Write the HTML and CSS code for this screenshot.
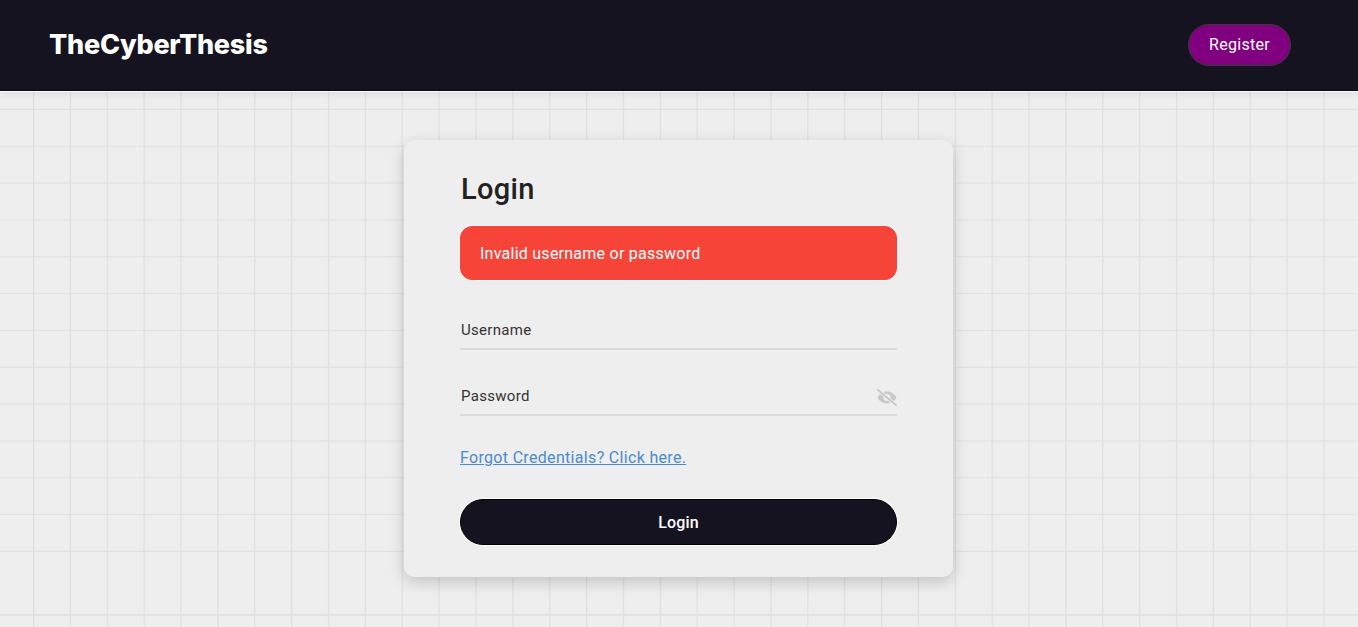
FILE: index.html
```html
<!DOCTYPE html>
<html lang="en">
<head>
<meta charset="utf-8">
<title>TheCyberThesis - Login</title>
<link rel="stylesheet" href="styles.css">
</head>
<body>
<header class="topbar">
  <a class="logo" href="#">TheCyberThesis</a>
  <a class="register" href="#">Register</a>
</header>
<main class="page">
  <form class="card">
    <h1 class="title">Login</h1>
    <div class="alert">Invalid username or password</div>
    <div class="field field-first"><span class="field-label">Username</span></div>
    <div class="field">
      <span class="field-label">Password</span>
      <svg class="eye" viewBox="0 0 20 17" width="20" height="17" aria-hidden="true">
        <path fill="#c9c9c9" fill-rule="evenodd" d="M10 2.500C5.800 2.500 2.200 5 .5 8.500 2.200 12 5.800 14.500 10 14.500s7.800-2.500 9.500-6C17.800 5 14.200 2.500 10 2.500zM10 5a3.500 3.500 0 1 1 0 7 3.500 3.500 0 0 1 0-7z"/>
        <path stroke="#eee" stroke-width="3.600" fill="none" d="M1 0.800l18 15.400"/>
        <path stroke="#c9c9c9" stroke-width="1.900" fill="none" stroke-linecap="round" d="M1 1l18 15"/>
      </svg>
    </div>
    <a class="forgot" href="#">Forgot Credentials? Click here.</a>
    <button class="submit" type="button">Login</button>
  </form>
</main>
</body>
</html>
```
FILE: styles.css
```css
* { box-sizing: border-box; }
html, body { height: 100%; }
body {
  margin: 0;
  overflow: hidden;
  font-family: Roboto, "Liberation Sans", sans-serif;
  color: #222;
  background-color: #eee;
  background-image:
    repeating-linear-gradient(to right, transparent 0 32.4px, #dfdfdf 33.500px, transparent 34.800px, transparent 36.870px),
    repeating-linear-gradient(to bottom, transparent 0 34.600px, #e0e0e0 35.840px, transparent 36.830px),
    linear-gradient(#e3e3e3, #e3e3e3);
  background-size: 100% 100%, 100% 570px, 100% 2px;
  background-position: 0 0, 0 0, 0 614px;
  background-repeat: no-repeat;
}
.topbar {
  height: 91px;
  display: flex;
  align-items: center;
  justify-content: space-between;
  padding: 0 67px 1px 49px;
  background: #14131f;
  border-bottom: 1px solid #0d0c14;
  box-shadow: 0 1px 0 #fafafa, 0 3px 8px rgba(0,0,0,.07);
}
.logo {
  font-family: Inter, Roboto, sans-serif;
  font-size: 27px;
  font-weight: 800;
  letter-spacing: -0.25px;
  color: #fff;
  text-decoration: none;
}
.register {
  width: 103px;
  height: 42px;
  display: flex;
  align-items: center;
  justify-content: center;
  border: 1px solid #3a3a3a;
  border-radius: 21px;
  background: #800080;
  color: #fff;
  font-size: 16px;
  letter-spacing: .3px;
  text-decoration: none;
}
.page {
  display: flex;
  justify-content: center;
  padding-top: 49px;
}
.card {
  width: 549px;
  height: 437px;
  margin-right: 1px;
  padding: 31px 56px 0;
  background: #eee;
  border-radius: 10px;
  box-shadow: 0 5px 15px rgba(0,0,0,.18);
  display: flex;
  flex-direction: column;
}
.title {
  margin: 0;
  padding-left: 1px;
  font-size: 29px;
  line-height: 36px;
  font-weight: 500;
  letter-spacing: .3px;
  color: #222;
}
.alert {
  margin-top: 19px;
  height: 54px;
  padding: 0 19px;
  display: flex;
  align-items: center;
  background: #f74438;
  border: 1px solid #f74438;
  border-radius: 12px;
  box-shadow: 0 0 0 1px rgba(255,255,255,.55);
  color: #fff;
  font-size: 16px;
  letter-spacing: .25px;
}
.field {
  height: 36px;
  margin-top: 30px;
  padding-bottom: 9px;
  display: flex;
  align-items: flex-end;
  justify-content: space-between;
  border-bottom: 2px solid #dcdcdc;
}
.field-first { margin-top: 34px; }
.field-label {
  padding-left: 1px;
  font-size: 15px;
  line-height: 18px;
  letter-spacing: .3px;
  color: #333;
}
.eye { display: block; margin-bottom: -1px; }
.forgot {
  margin-top: 32px;
  align-self: flex-start;
  font-size: 16px;
  line-height: 20px;
  letter-spacing: .32px;
  color: #4a8bd0;
}
.submit {
  margin-top: 31px;
  height: 46px;
  border: 1px solid #000;
  border-radius: 23px;
  background: #14131f;
  box-shadow: 0 0 0 1px #fff;
  color: #fff;
  font-family: inherit;
  font-size: 16px;
  letter-spacing: .1px;
  font-weight: 500;
}
```
